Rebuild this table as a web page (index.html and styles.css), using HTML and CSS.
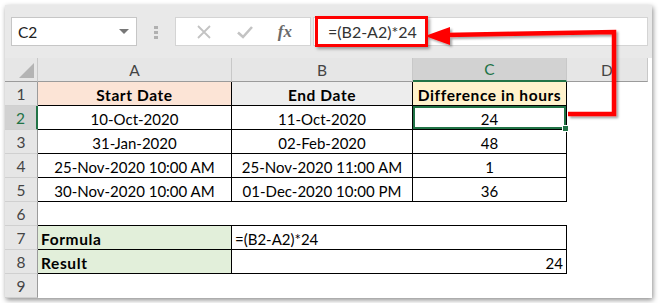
FILE: index.html
```html
<!DOCTYPE html>
<html lang="en">
<head>
    <meta charset="UTF-8">
    <title>Difference in hours</title>
    <link rel="stylesheet" href="styles.css">
</head>
<body>

    <div class="window">

        <!-- Name box and formula bar -->
        <div class="toolbar">
            <div class="namebox">
                <span>C2</span>
                <span class="drop"></span>
            </div>
            <div class="grip"><i></i><i></i><i></i></div>
            <div class="fbtns">
                <svg width="16" height="16" viewBox="0 0 16 16"><path d="M2 2 L14 14 M14 2 L2 14" stroke="#c3c3c3" stroke-width="1.8" fill="none"/></svg>
                <svg width="18" height="16" viewBox="0 0 18 16"><path d="M2 8.5 L7 13 L16 3" stroke="#c3c3c3" stroke-width="2.6" fill="none"/></svg>
                <span class="fx">fx</span>
            </div>
            <div class="fbar">
                <span class="formula">=(B2-A2)*24</span>
            </div>
        </div>

        <!-- Worksheet -->
        <div class="sheet">
            <div class="hd corner"><span class="tri"></span></div>
            <div class="hd col">A</div>
            <div class="hd col">B</div>
            <div class="hd col sel">C</div>
            <div class="hd col last">D</div>

            <div class="hd row">1</div>
            <div class="c t bold peach">Start Date</div>
            <div class="c t bold grey">End Date</div>
            <div class="c t bold yellow">Difference in hours</div>
            <div class="c"></div>

            <div class="hd row sel">2</div>
            <div class="c t">10-Oct-2020</div>
            <div class="c t">11-Oct-2020</div>
            <div class="c t active">24</div>
            <div class="c"></div>

            <div class="hd row">3</div>
            <div class="c t">31-Jan-2020</div>
            <div class="c t">02-Feb-2020</div>
            <div class="c t">48</div>
            <div class="c"></div>

            <div class="hd row">4</div>
            <div class="c t">25-Nov-2020 10:00 AM</div>
            <div class="c t">25-Nov-2020 11:00 AM</div>
            <div class="c t">1</div>
            <div class="c"></div>

            <div class="hd row">5</div>
            <div class="c t">30-Nov-2020 10:00 AM</div>
            <div class="c t">01-Dec-2020 10:00 PM</div>
            <div class="c t">36</div>
            <div class="c"></div>

            <div class="hd row">6</div>
            <div class="c under"></div>
            <div class="c under"></div>
            <div class="c under"></div>
            <div class="c"></div>

            <div class="hd row">7</div>
            <div class="c t bold green left">Formula</div>
            <div class="c t left span2">=(B2-A2)*24</div>
            <div class="c"></div>

            <div class="hd row">8</div>
            <div class="c t bold green left">Result</div>
            <div class="c t right span2">24</div>
            <div class="c"></div>

            <div class="hd row">9</div>
            <div class="c"></div>
            <div class="c"></div>
            <div class="c"></div>
            <div class="c"></div>
        </div>
    </div>

    <!-- callout from C2 up to the formula bar -->
    <svg class="arrow" width="660" height="307" viewBox="0 0 660 307">
        <defs>
            <filter id="shade" x="-10%" y="-10%" width="130%" height="130%">
                <feDropShadow dx="2" dy="2" stdDeviation="1.2" flood-color="#000" flood-opacity="0.35"/>
            </filter>
        </defs>
        <g filter="url(#shade)">
            <polyline points="446,35 614,32 614,114 568,114" fill="none" stroke="#ff0000" stroke-width="4.5" stroke-linejoin="miter"/>
            <polygon points="425,36 450,27 450,45" fill="#ff0000"/>
        </g>
    </svg>

</body>
</html>
```

FILE: styles.css
```css
body {
    margin: 0;
    padding: 5px;
    background: #fff;
    position: relative;
    font-family: Lato, "Liberation Sans", sans-serif;
}

.window {
    width: 647px;
    height: 293px;
    background: #fff;
    box-shadow: 1px 2px 5px rgba(0, 0, 0, 0.45);
    overflow: hidden;
}

.toolbar {
    height: 53px;
    box-sizing: border-box;
    padding: 12px 4px 0 6px;
    background: #e9e9e9;
    display: flex;
    align-items: flex-start;
}

.namebox {
    width: 126px;
    height: 29px;
    box-sizing: border-box;
    background: #fff;
    border: 1px solid #c6c6c6;
    display: flex;
    align-items: center;
    justify-content: space-between;
    padding: 0 7px 0 6px;
    font-size: 15.5px;
    color: #222;
}

.drop {
    width: 0;
    height: 0;
    border-left: 5px solid transparent;
    border-right: 5px solid transparent;
    border-top: 5px solid #777;
}

.grip {
    margin: 9px 17px 0 17px;
    display: flex;
    flex-direction: column;
    gap: 2px;
}

.grip i {
    width: 4px;
    height: 3px;
    background: #b0b0b0;
}

.fbtns {
    width: 136px;
    height: 29px;
    box-sizing: border-box;
    background: #fff;
    border: 1px solid #d4d4d4;
    display: flex;
    align-items: center;
    justify-content: space-around;
    padding: 0 6px 0 8px;
}

.fx {
    font-family: "Liberation Serif", serif;
    font-style: italic;
    font-weight: bold;
    font-size: 17px;
    color: #6a6a6a;
}

.fbar {
    flex: 1;
    height: 29px;
    margin-left: 2px;
    background: #fff;
    border: 1px solid #d4d4d4;
    box-sizing: border-box;
}

.formula {
    display: inline-block;
    margin: -2px 0 0 1px;
    width: 113px;
    height: 31px;
    box-sizing: border-box;
    border: 3px solid #ff0000;
    box-shadow: 2px 2px 3px rgba(0, 0, 0, 0.35);
    padding-left: 10px;
    line-height: 25px;
    font-size: 16px;
    color: #333;
    background: #fff;
}

/* grid of cells */
.sheet {
    display: grid;
    grid-template-columns: 33px 194px 181px 154px 81px;
    grid-auto-rows: 24px;
    font-size: 15px;
    color: #000;
}

.hd {
    background: #e6e6e6;
    color: #444;
    font-size: 15.5px;
    display: flex;
    align-items: center;
    justify-content: center;
    box-sizing: border-box;
}

.corner {
    position: relative;
    border-right: 1px solid #c8c8c8;
    border-bottom: 1px solid #9b9b9b;
}

.tri {
    position: absolute;
    right: 3px;
    bottom: 3px;
    width: 0;
    height: 0;
    border-left: 15px solid transparent;
    border-bottom: 15px solid #b4b4b4;
}

.col {
    border-right: 1px solid #c8c8c8;
    border-bottom: 1px solid #9b9b9b;
}

.row {
    border-right: 1px solid #9b9b9b;
    border-bottom: 1px solid #d0d0d0;
}

.hd.sel {
    background: #d2d2d2;
    color: #217346;
}

.col.sel {
    border-bottom: 2px solid #217346;
}

.row.sel {
    border-right: 2px solid #217346;
}

.c {
    box-sizing: border-box;
    display: flex;
    align-items: center;
    justify-content: center;
    padding-top: 2px;
    white-space: nowrap;
}

.c.t {
    border-right: 1px solid #000;
    border-bottom: 1px solid #000;
}

.c.under {
    border-bottom: 1px solid #000;
}

.bold {
    font-weight: bold;
    font-size: 15.5px;
    letter-spacing: 0.6px;
}

.left {
    justify-content: flex-start;
    padding-left: 3px;
}

.right {
    justify-content: flex-end;
    padding-right: 3px;
}

.span2 {
    grid-column: span 2;
}

.peach {
    background: #fce4d6;
}

.grey {
    background: #ededed;
}

.yellow {
    background: #fff2cc;
}

.green {
    background: #e2efda;
}

.active {
    position: relative;
    box-shadow: inset 0 0 0 2px #217346;
}

.active::after {
    content: "";
    position: absolute;
    right: -3px;
    bottom: -3px;
    width: 5px;
    height: 5px;
    background: #217346;
    border: 1px solid #fff;
}

.arrow {
    position: absolute;
    left: 0;
    top: 0;
    pointer-events: none;
}
```
